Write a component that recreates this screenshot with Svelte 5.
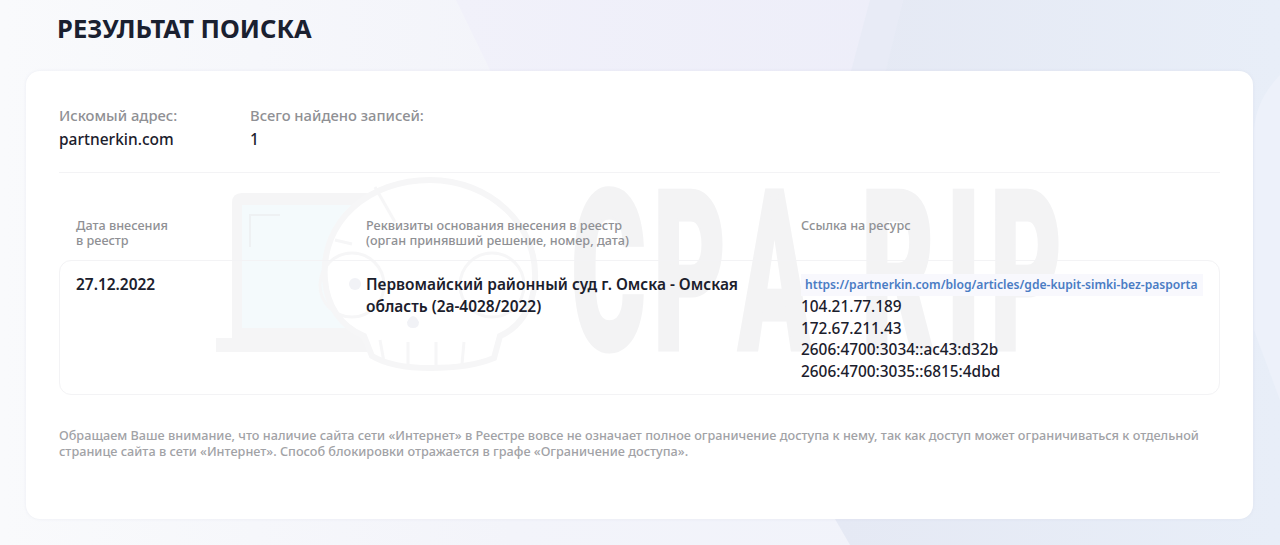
<script>
  const ips = ['104.21.77.189', '172.67.211.43', '2606:4700:3034::ac43:d32b', '2606:4700:3035::6815:4dbd'];
  const letters = [
    { c: 'C', x: 571, w: 75 },
    { c: 'P', x: 653, w: 73 },
    { c: 'A', x: 738, w: 73 },
    { c: 'R', x: 861, w: 74 },
    { c: 'I', x: 946, w: 35 },
    { c: 'P', x: 990, w: 72 }
  ];
</script>

<div class="page">
  <svg class="bg" viewBox="0 0 1280 545" preserveAspectRatio="none" aria-hidden="true">
    <defs>
      <linearGradient id="g0" x1="0" y1="0" x2="1" y2="0">
        <stop offset="0" stop-color="#f9fafc" />
        <stop offset="0.4" stop-color="#f3f4fa" />
        <stop offset="0.7" stop-color="#f1f3fa" />
      </linearGradient>
      <linearGradient id="g1" x1="0" y1="0" x2="1" y2="0">
        <stop offset="0" stop-color="#f1f1fa" />
        <stop offset="1" stop-color="#eaebf8" />
      </linearGradient>
      <linearGradient id="g2" x1="0" y1="0" x2="1" y2="0">
        <stop offset="0" stop-color="#e5e9f4" />
        <stop offset="1" stop-color="#e8eef8" />
      </linearGradient>
    </defs>
    <rect width="1280" height="545" fill="url(#g0)" />
    <polygon points="456,0 1280,0 1280,519 700,519 490,70" fill="url(#g1)" />
    <polygon points="903,0 1280,0 1280,545 850,545 835,519 885,70" fill="url(#g2)" />
    <polygon points="870,0 903,0 885,75 850,75" fill="#e8ebf6" />
    <path d="M1280 75 Q1256 100 1254 130 V330 L1280 400 Z" fill="#edf1fa" />
  </svg>

  <h1>Результат поиска</h1>

  <section class="card">
    <svg class="mark" viewBox="0 0 1280 545" aria-hidden="true">
      <g class="laptop">
        <path class="frame" d="M232 203 Q232 193 242 193 H400 V352 H216 V338 H232 Z" />
        <rect class="screen" x="242" y="205" width="150" height="123" />
        <path class="glint" d="M250 247 V215 H280" />
      </g>
      <g class="skull">
        <path class="skull-fill" d="M325 280 C320 220 370 180 430 180 C490 180 538 225 535 280 C533 310 518 328 500 336 L494 358 Q470 368 430 368 Q392 368 372 356 L364 336 C340 326 327 305 325 280 Z" />
        <path class="skull-line" d="M325 280 C320 220 370 180 430 180 C490 180 538 225 535 280 C533 310 518 328 500 336 L494 358 Q470 368 430 368 Q392 368 372 356 L364 336 C340 326 327 305 325 280 Z" />
        <path class="skull-thin" d="M375 187 L395 222 M335 240 L352 244" />
        <circle class="skull-thin" cx="352" cy="285" r="32" />
        <circle class="skull-thin" cx="492" cy="285" r="32" />
        <circle class="eye" cx="355" cy="284" r="6" />
        <path class="eye" d="M407 322 Q413 310 419 322 Q419 328 413 328 Q407 328 407 322 Z" />
        <path class="skull-thin" d="M380 340 L384 362 M408 342 V366 M436 342 V366 M464 342 L462 364" />
      </g>
      {#each letters as l}
        <text class="wm" x={l.x} y="350" textLength={l.w} lengthAdjust="spacingAndGlyphs">{l.c}</text>
      {/each}
    </svg>

    <div class="summary">
      <div class="field first">
        <div class="label">Искомый адрес:</div>
        <div class="value">partnerkin.com</div>
      </div>
      <div class="field">
        <div class="label">Всего найдено записей:</div>
        <div class="value">1</div>
      </div>
    </div>

    <div class="cols heads">
      <div>Дата внесения<br />в реестр</div>
      <div>Реквизиты основания внесения в реестр<br />(орган принявший решение, номер, дата)</div>
      <div>Ссылка на ресурс</div>
    </div>

    <div class="cols row">
      <div class="strong">27.12.2022</div>
      <div class="strong">Первомайский районный суд г. Омска - Омская область (2а-4028/2022)</div>
      <div class="res">
        <a href="#top">https://partnerkin.com/blog/articles/gde-kupit-simki-bez-pasporta</a>
        {#each ips as ip}
          <div class="ip">{ip}</div>
        {/each}
      </div>
    </div>

    <p class="note">Обращаем Ваше внимание, что наличие сайта сети «Интернет» в Реестре вовсе не означает полное ограничение доступа к нему, так как доступ может ограничиваться к отдельной странице сайта в сети «Интернет». Способ блокировки отражается в графе «Ограничение доступа».</p>
  </section>
</div>

<style>
  :global(body) {
    margin: 0;
    background: #f7f8fb;
  }
  .page {
    position: relative;
    width: 1280px;
    height: 545px;
    overflow: hidden;
    padding: 11px 27px 0 26px;
    box-sizing: border-box;
    font-family: "Noto Sans", "Open Sans", sans-serif;
    color: #1b202c;
  }
  .bg {
    position: absolute;
    inset: 0;
    width: 100%;
    height: 100%;
  }
  h1 {
    position: relative;
    margin: 0 0 25px 31px;
    font-size: 25.5px;
    line-height: 35px;
    font-weight: 700;
    text-transform: uppercase;
    color: #1a2030;
  }
  .card {
    position: relative;
    height: 448px;
    padding: 32px 33px 0;
    box-sizing: border-box;
    background: #fff;
    border-radius: 14px;
    box-shadow: 0 0 3px rgba(190, 195, 215, 0.25);
  }
  .mark {
    position: absolute;
    left: -26px;
    top: -71px;
    width: 1280px;
    height: 545px;
    pointer-events: none;
  }
  .frame { fill: #f5f5f6; }
  .screen { fill: #f4fafc; }
  .glint { fill: none; stroke: #eef1f3; stroke-width: 2; }
  .skull-fill { fill: #fff; }
  .skull-line { fill: none; stroke: #f6f6f7; stroke-width: 6; }
  .skull-thin { fill: none; stroke: #f6f6f7; stroke-width: 3; }
  .eye { fill: #f1f2f6; }
  .wm {
    font-family: Roboto, "Liberation Sans", sans-serif;
    font-size: 224px;
    font-weight: 900;
    fill: #f3f3f4;
    stroke: #f3f3f4;
    stroke-width: 3px;
  }
  .summary {
    position: relative;
    display: flex;
    padding-bottom: 21px;
    border-bottom: 1px solid #f3f3f5;
  }
  .field.first { width: 191px; }
  .label {
    font-size: 14.75px;
    line-height: 24px;
    font-weight: 500;
    color: #8f9094;
  }
  .value {
    font-size: 15.5px;
    line-height: 24px;
    font-weight: 500;
    color: #1b202c;
  }
  .cols {
    position: relative;
    display: grid;
    grid-template-columns: 290px 435px 402px;
  }
  .heads {
    margin-top: 45px;
    padding: 0 17px 12px;
    font-size: 12.65px;
    line-height: 15px;
    font-weight: 500;
    color: #8f9094;
  }
  .row {
    height: 135px;
    box-sizing: border-box;
    padding: 13px 0 0 16px;
    border: 1px solid #f3f3f5;
    border-radius: 12px;
  }
  .strong {
    font-size: 15.45px;
    line-height: 21.5px;
    font-weight: 600;
    padding-right: 50px;
  }
  .res { min-width: 0; }
  .res a {
    display: block;
    padding: 0 4px;
    height: 22px;
    line-height: 22px;
    font-size: 12.1px;
    font-weight: 600;
    color: #4a7cc4;
    text-decoration: none;
    background: #f8f8fd;
    white-space: nowrap;
  }
  .ip {
    font-size: 15.4px;
    line-height: 21.5px;
    font-weight: 500;
  }
  .note {
    position: relative;
    margin: 32px 0 0;
    font-size: 12.68px;
    line-height: 16px;
    font-weight: 500;
    color: #a1a2a6;
  }
</style>
